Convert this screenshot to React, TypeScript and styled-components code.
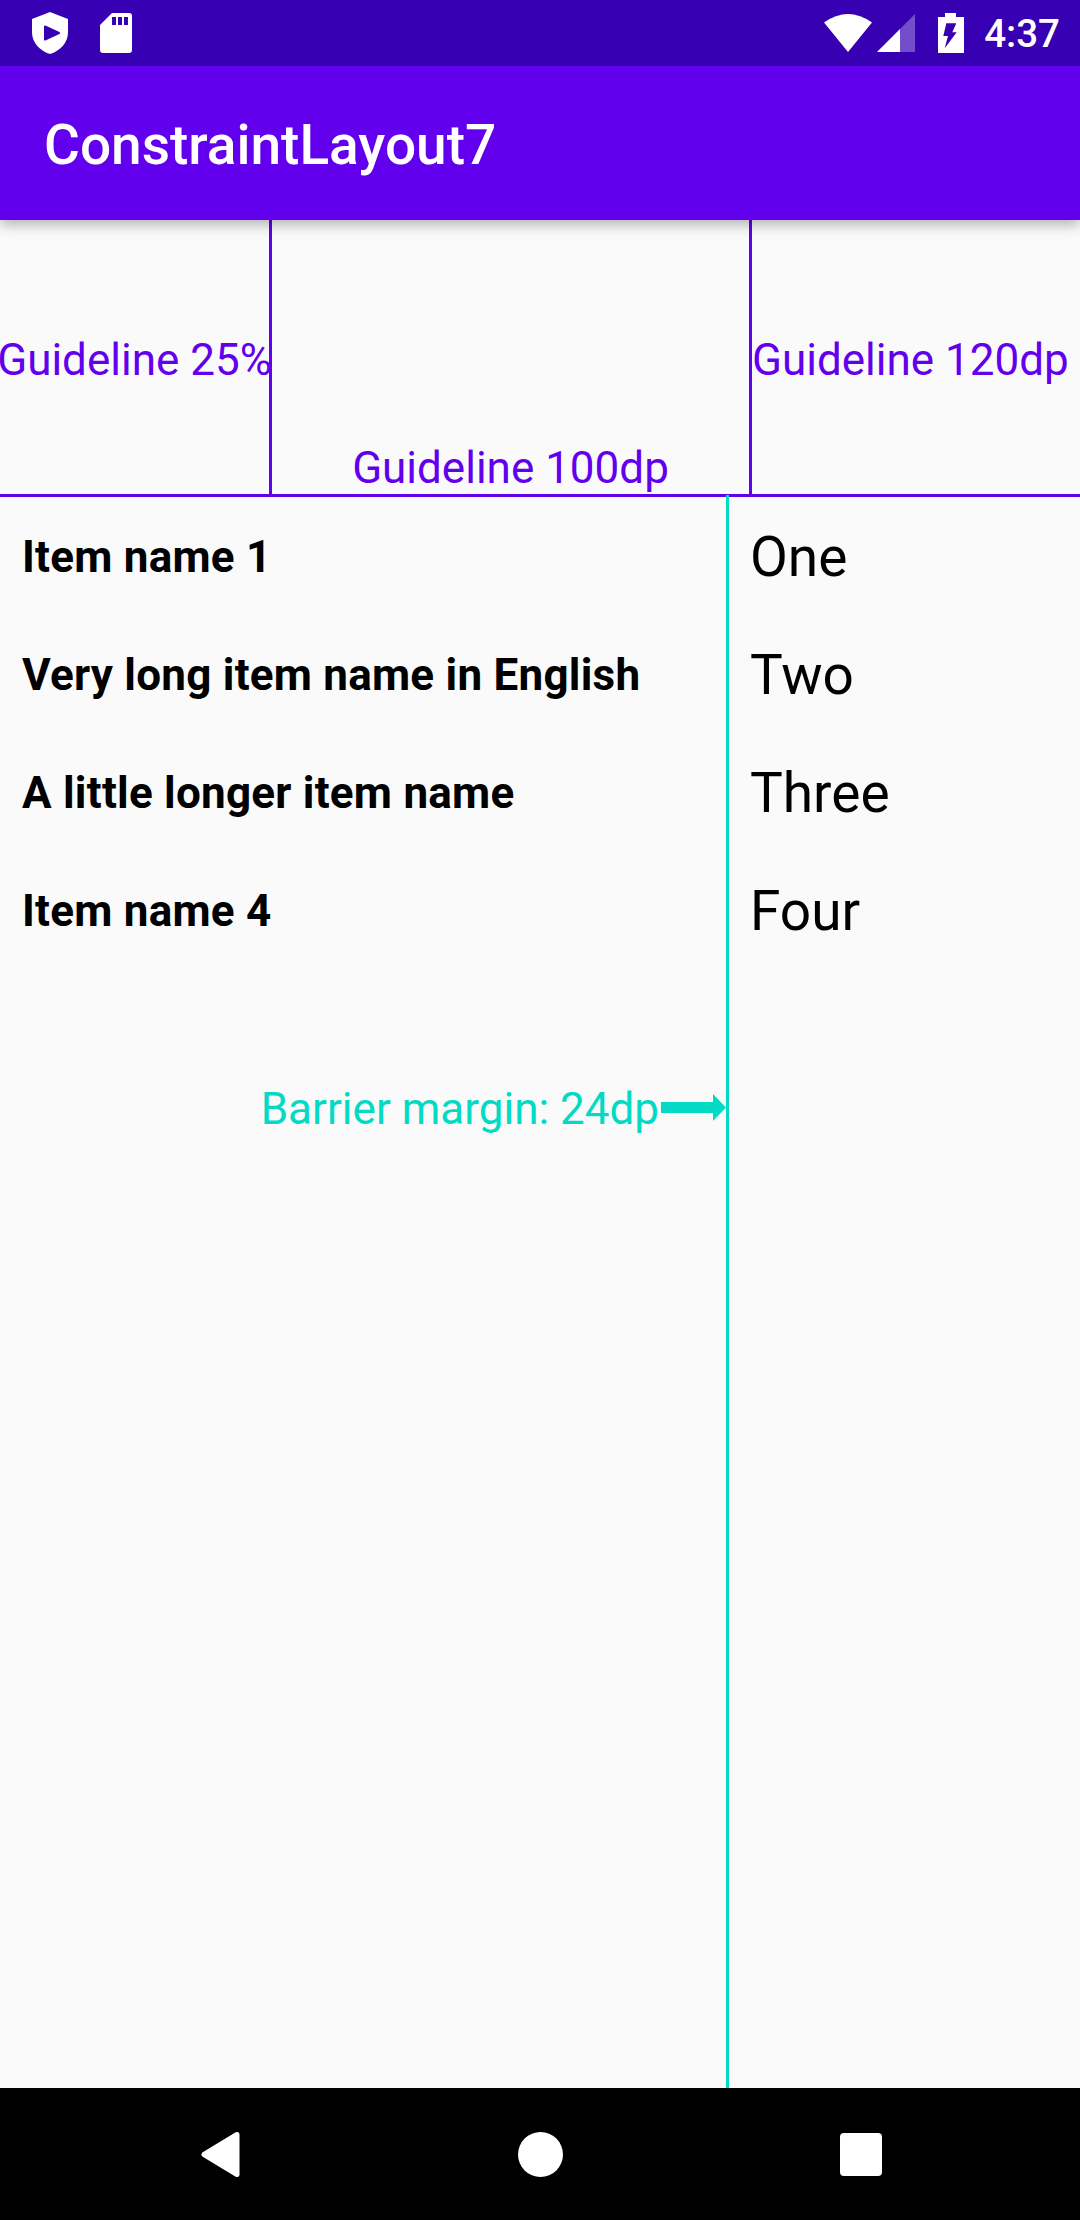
import React from "react";
import styled, { createGlobalStyle } from "styled-components";

const Global = createGlobalStyle`
  html, body { margin: 0; padding: 0; background: #fafafa; }
  #root { width: 1080px; height: 2220px; overflow: hidden; }
  * { box-sizing: border-box; }
`;

const purple = "#6200ee";
const dark = "#3700b3";
const teal = "#03dac5";

const Screen = styled.div`
  width: 1080px;
  height: 2220px;
  display: flex;
  flex-direction: column;
  background: #fafafa;
  font-family: Roboto, "Liberation Sans", sans-serif;
`;
const StatusBar = styled.div`
  height: 66px;
  flex: none;
  background: ${dark};
  display: flex;
  align-items: center;
  justify-content: space-between;
  padding: 0 20px 0 32px;
  position: relative;
  z-index: 2;
`;
const StatusGroup = styled.div`
  display: flex;
  align-items: center;
`;
const Glyph = styled.svg<{ $gap?: number }>`
  display: block;
  flex: none;
  margin-right: ${(p) => p.$gap ?? 0}px;
`;
const Arrow = styled.svg`
  display: block;
  flex: none;
  margin-bottom: 3px;
`;
const Clock = styled.span`
  color: #fff;
  font-size: 38.5px;
  font-weight: 500;
  margin-left: 20px;
  line-height: 45px;
`;
const AppBar = styled.div`
  height: 154px;
  flex: none;
  background: ${purple};
  display: flex;
  align-items: center;
  padding: 3px 0 0 44px;
  color: #fff;
  font-size: 55px;
  font-weight: 500;
  box-shadow: 0 5px 12px rgba(0, 0, 0, 0.28);
  position: relative;
  z-index: 1;
`;
const Guides = styled.div`
  height: 277px;
  flex: none;
  display: grid;
  grid-template-columns: 272px 480px 1fr;
  border-bottom: 3px solid ${purple};
`;
const GuideCell = styled.div<{ $align: "center" | "end"; $justify: "center" | "start"; $line?: boolean }>`
  display: flex;
  align-items: ${(p) => (p.$align === "end" ? "flex-end" : "center")};
  justify-content: ${(p) => (p.$justify === "center" ? "center" : "flex-start")};
  padding-top: ${(p) => (p.$align === "center" ? 5 : 0)}px;
  border-right: ${(p) => (p.$line ? `3px solid ${purple}` : "none")};
  min-width: 0;
`;
const GuideText = styled.span`
  color: ${purple};
  font-size: 44px;
  line-height: 52px;
  white-space: nowrap;
`;
const Body = styled.div`
  flex: 1;
  display: flex;
  min-height: 0;
`;
const NamesColumn = styled.div`
  width: 726px;
  flex: none;
  display: flex;
  flex-direction: column;
`;
const NameRow = styled.div`
  height: 118px;
  display: flex;
  align-items: center;
  padding: 2px 0 0 22px;
  color: #000;
  font-size: 44px;
  font-weight: 700;
  letter-spacing: 0.24px;
`;
const BarrierNote = styled.div`
  display: flex;
  align-items: center;
  justify-content: flex-end;
  margin-top: 114px;
  color: ${teal};
  font-size: 44px;
  line-height: 52px;
`;
const ValuesColumn = styled.div`
  flex: 1;
  margin-top: -2px;
  padding: 2px 0 0 21px;
  border-left: 3px solid ${teal};
  position: relative;
`;
const ValueRow = styled.div`
  height: 118px;
  display: flex;
  align-items: center;
  padding-top: 2px;
  color: #000;
  font-size: 55px;
`;
const NavBar = styled.div`
  height: 132px;
  flex: none;
  background: #000;
  display: flex;
  align-items: center;
  justify-content: space-between;
  padding: 0 198px 0 201px;
`;

const names = ["Item name 1", "Very long item name in English", "A little longer item name", "Item name 4"];
const values = ["One", "Two", "Three", "Four"];

export default function App() {
  return (
    <Screen>
      <Global />
      <StatusBar>
        <StatusGroup>
          <Glyph $gap={32} width="36" height="42" viewBox="0 0 36 42">
            <path d="M18 0L36 7V20C36 31 28 39 18 42C8 39 0 31 0 20V7Z" fill="#fff" />
            <path d="M13 14.5L27 21L13 27.5Z" fill={dark} stroke={dark} strokeWidth="2" strokeLinejoin="round" />
          </Glyph>
          <Glyph width="32" height="40" viewBox="0 0 32 40">
            <path d="M12 0H29a3 3 0 0 1 3 3V37a3 3 0 0 1-3 3H3a3 3 0 0 1-3-3V12Z" fill="#fff" />
            <path d="M12 4h4v8h-4zM18 4h4v8h-4zM24 4h4v8h-4z" fill={dark} />
          </Glyph>
        </StatusGroup>
        <StatusGroup>
          <Glyph $gap={5} width="48" height="38" viewBox="0 0 48 38">
            <path d="M0 8.5Q24 -8.5 48 8.5L24 38Z" fill="#fff" />
          </Glyph>
          <Glyph $gap={23} width="38" height="38" viewBox="0 0 38 38">
            <path d="M0 38L23 15V38Z" fill="#fff" />
            <path d="M23 15L38 0V38H23Z" fill="#fff" fillOpacity="0.3" />
          </Glyph>
          <Glyph width="26" height="40" viewBox="0 0 26 40">
            <path d="M7 0H18V4H26V40H0V4H7Z" fill="#fff" />
            <path d="M8.3 10.3H18.3L14.3 19.3H18.7L6.7 35.3L10 23H5.3Z" fill={dark} />
          </Glyph>
          <Clock>4:37</Clock>
        </StatusGroup>
      </StatusBar>
      <AppBar>ConstraintLayout7</AppBar>
      <Guides>
        <GuideCell $align="center" $justify="center" $line>
          <GuideText>Guideline 25%</GuideText>
        </GuideCell>
        <GuideCell $align="end" $justify="center" $line>
          <GuideText>Guideline 100dp</GuideText>
        </GuideCell>
        <GuideCell $align="center" $justify="start">
          <GuideText>Guideline 120dp</GuideText>
        </GuideCell>
      </Guides>
      <Body>
        <NamesColumn>
          {names.map((n) => (
            <NameRow key={n}>{n}</NameRow>
          ))}
          <BarrierNote>
            Barrier margin: 24dp
            <Arrow width="67" height="27" viewBox="0 0 67 27">
              <path d="M2 8H54V0L67 13.5L54 27V19H2Z" fill={teal} />
            </Arrow>
          </BarrierNote>
        </NamesColumn>
        <ValuesColumn>
          {values.map((v) => (
            <ValueRow key={v}>{v}</ValueRow>
          ))}
        </ValuesColumn>
      </Body>
      <NavBar>
        <Glyph width="39" height="45" viewBox="0 0 39 45">
          <path d="M36 2.5V42.5L3 22.5Z" fill="#fff" stroke="#fff" strokeWidth="5" strokeLinejoin="round" />
        </Glyph>
        <Glyph width="45" height="45" viewBox="0 0 45 45">
          <circle cx="22.5" cy="22.5" r="22.5" fill="#fff" />
        </Glyph>
        <Glyph width="42" height="43" viewBox="0 0 42 43">
          <rect width="42" height="43" rx="4" fill="#fff" />
        </Glyph>
      </NavBar>
    </Screen>
  );
}
